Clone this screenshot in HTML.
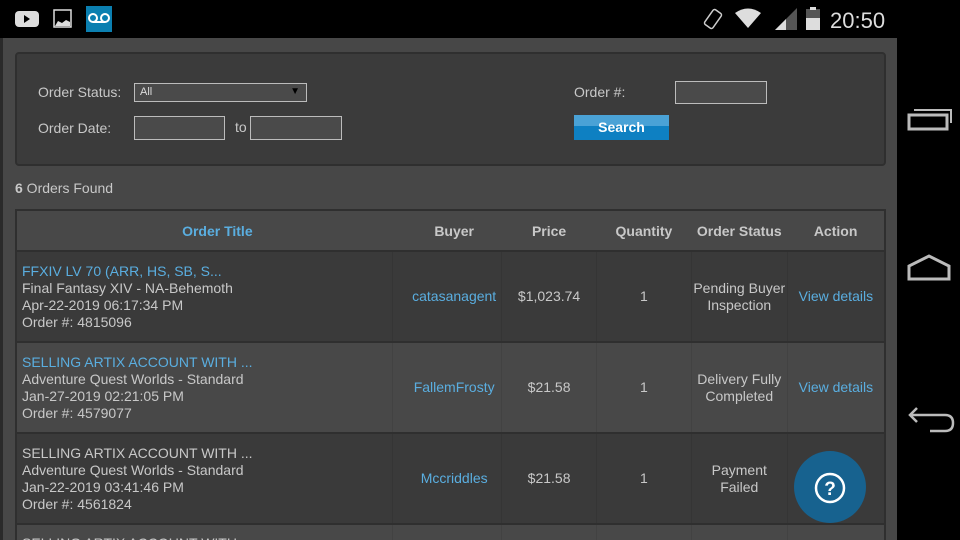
<!DOCTYPE html>
<html style="width:960px;height:540px;overflow:hidden"><head><meta charset="utf-8"><style>
*{margin:0;padding:0;box-sizing:border-box}
body{width:960px;height:540px;overflow:hidden;background:#000;font-family:"Liberation Sans",Roboto,sans-serif;position:relative;color:#c8c8c8}
.sb{position:absolute;left:0;top:0;width:960px;height:38px;background:#000}
.nav{position:absolute;left:897px;top:38px;width:63px;height:502px;background:#000}
.main{position:absolute;left:0;top:38px;width:897px;height:502px;background:#474747;border-left:3px solid #2a2a2a;overflow:hidden}
.panel{position:absolute;left:12px;top:14px;width:871px;height:114px;background:#3b3b3b;border:2px solid #2f2f2f;border-radius:4px}
.lbl{position:absolute;font-size:14px;color:#c8c8c8}
.inp{position:absolute;background:#4a4a4a;border:1px solid #bcbcbc}
.btn{position:absolute;left:571px;top:77px;width:95px;height:25px;background:linear-gradient(#4aa2d6 0,#4aa2d6 45%,#0e80c2 45%);color:#fff;font-weight:bold;font-size:14px;text-align:center;line-height:24px}
table{position:absolute;left:12px;top:171px;width:871px;border-collapse:collapse;font-size:14px;border:2px solid #2f2f2f}
th{height:41px;background:#484848;color:#c8c8c8;font-weight:bold;font-size:14px;border-bottom:2px solid #2f2f2f}
td{height:91px;text-align:center;line-height:17px;border-bottom:2px solid #2f2f2f;border-left:1px solid rgba(0,0,0,0.08)}
td:first-child{text-align:left;padding-left:5px;border-left:none}
tr.d td{background:#3a3a3a}
tr.l td{background:#484848}
.b{color:#5aaee0}
</style></head><body>
<div class="sb">
<svg width="960" height="38" style="position:absolute;left:0;top:0">
<rect x="15" y="11" width="24" height="16" rx="4" fill="#ddd"/><path d="M24 15 L30 19 L24 23Z" fill="#000"/>
<rect x="54" y="10" width="17" height="17" fill="none" stroke="#ddd" stroke-width="1.5"/><path d="M55 26 L58 21 L62 23 L66 20 L70 22 L70 26Z" fill="#ddd"/>
<rect x="86" y="6" width="26" height="26" fill="#0b7fb0"/><circle cx="93" cy="18" r="4" fill="none" stroke="#fff" stroke-width="2"/><circle cx="105" cy="18" r="4" fill="none" stroke="#fff" stroke-width="2"/><line x1="93" y1="22" x2="105" y2="22" stroke="#fff" stroke-width="2"/>
<rect x="708" y="10" width="10" height="18" rx="2" transform="rotate(35 713 19)" fill="none" stroke="#ccc" stroke-width="1.5"/>
<path d="M735 13 Q748 4 761 13 L748 28Z" fill="#ddd"/>
<path d="M775 30 L797 8 L797 30Z" fill="#555"/><path d="M775 30 L786 19 L786 30Z" fill="#ddd"/>
<rect x="806" y="9" width="14" height="21" fill="#555"/><rect x="806" y="18" width="14" height="12" fill="#ddd"/><rect x="810" y="7" width="6" height="3" fill="#ddd"/>
<text x="830" y="28" font-size="22" fill="#ddd" font-family="Liberation Sans">20:50</text>
</svg></div>
<div class="nav"><svg width="63" height="502">
<rect x="12" y="77" width="38" height="14" fill="none" stroke="#bbb" stroke-width="3"/><path d="M17 72 L54 72 L54 85" fill="none" stroke="#bbb" stroke-width="2"/>
<path d="M12 241 L12 228 L32 218 L52 228 L52 241Z" fill="none" stroke="#bbb" stroke-width="3"/>
<path d="M20 370 L13 377 L20 384 M13 377 L48 377 Q56 377 56 385 Q56 393 48 393 L33 393" fill="none" stroke="#bbb" stroke-width="2.5"/>
</svg></div>
<div class="main">
<div class="panel"></div>
<div class="lbl" style="left:35px;top:46px">Order Status:</div>
<div class="inp" style="left:131px;top:45px;width:173px;height:19px;font-size:11px;color:#ddd;padding-left:5px;line-height:16px">All<span style="position:absolute;right:6px;color:#000;font-size:10px">▼</span></div>
<div class="lbl" style="left:35px;top:82px">Order Date:</div>
<div class="inp" style="left:131px;top:78px;width:91px;height:24px"></div>
<div class="lbl" style="left:232px;top:81px">to</div>
<div class="inp" style="left:247px;top:78px;width:92px;height:24px"></div>
<div class="lbl" style="left:571px;top:46px">Order #:</div>
<div class="inp" style="left:672px;top:43px;width:92px;height:23px"></div>
<div class="btn">Search</div>
<div class="lbl" style="left:12px;top:142px"><b>6</b> Orders Found</div>
<table>
<colgroup><col style="width:378px"><col style="width:109px"><col style="width:95px"><col style="width:95px"><col style="width:96px"><col style="width:98px"></colgroup>
<tr><th style="color:#5aaee0;padding-left:25px">Order Title</th><th style="padding-left:14px">Buyer</th><th>Price</th><th>Quantity</th><th>Order Status</th><th>Action</th></tr>
<tr class="d"><td><span class="b">FFXIV LV 70 (ARR, HS, SB, S...</span><br>Final Fantasy XIV - NA-Behemoth<br>Apr-22-2019 06:17:34 PM<br>Order #: 4815096</td><td class="b" style="padding-left:14px">catasanagent</td><td>$1,023.74</td><td>1</td><td>Pending Buyer<br>Inspection</td><td class="b">View details</td></tr>
<tr class="l"><td><span class="b">SELLING ARTIX ACCOUNT WITH ...</span><br>Adventure Quest Worlds - Standard<br>Jan-27-2019 02:21:05 PM<br>Order #: 4579077</td><td class="b" style="padding-left:14px">FallemFrosty</td><td>$21.58</td><td>1</td><td>Delivery Fully<br>Completed</td><td class="b">View details</td></tr>
<tr class="d"><td>SELLING ARTIX ACCOUNT WITH ...<br>Adventure Quest Worlds - Standard<br>Jan-22-2019 03:41:46 PM<br>Order #: 4561824</td><td class="b" style="padding-left:14px">Mccriddles</td><td>$21.58</td><td>1</td><td>Payment<br>Failed</td><td></td></tr>
<tr class="l"><td style="vertical-align:top;padding-top:10px">SELLING ARTIX ACCOUNT WITH ...</td><td></td><td></td><td></td><td></td><td></td></tr>
</table>
<svg width="72" height="72" style="position:absolute;left:791px;top:413px"><circle cx="36" cy="36" r="36" fill="#17628f"/><circle cx="36" cy="37" r="14" fill="none" stroke="#fff" stroke-width="2.5"/><text x="36" y="44" text-anchor="middle" font-size="19" font-weight="bold" fill="#fff" font-family="Liberation Sans">?</text></svg>
</div>
</body></html>
